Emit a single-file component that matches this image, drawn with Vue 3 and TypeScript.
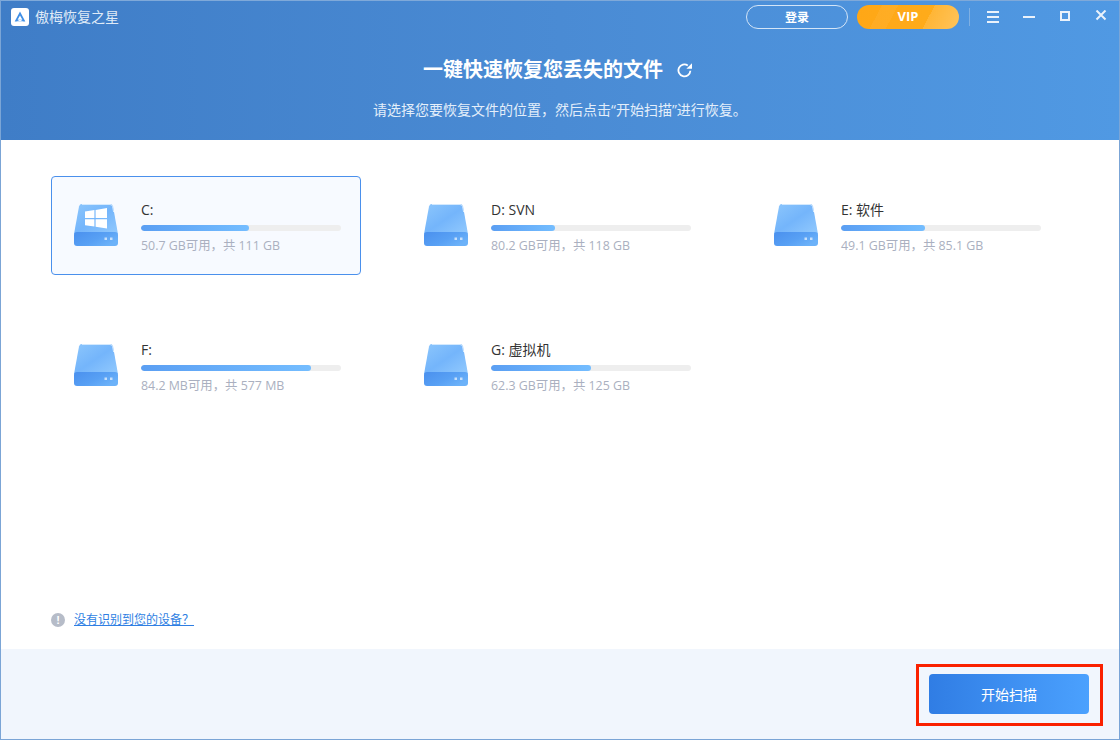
<script setup lang="ts">
interface Drive {
  id: string
  label: string
  used: number
  info: string
  system?: boolean
  selected?: boolean
}

const drives: Drive[] = [
  { id: 'c', label: 'C:', used: 54, info: '50.7 GB可用，共 111 GB', system: true, selected: true },
  { id: 'd', label: 'D: SVN', used: 32, info: '80.2 GB可用，共 118 GB' },
  { id: 'e', label: 'E: 软件', used: 42, info: '49.1 GB可用，共 85.1 GB' },
  { id: 'f', label: 'F:', used: 85, info: '84.2 MB可用，共 577 MB' },
  { id: 'g', label: 'G: 虚拟机', used: 50, info: '62.3 GB可用，共 125 GB' }
]
</script>

<template>
  <div class="window">
    <header class="hero">
      <div class="titlebar">
        <div class="brand">
          <svg class="logo" viewBox="0 0 18 18" width="18" height="18">
            <rect width="18" height="18" rx="3" fill="#fff" />
            <path d="M9 3.6 L14.3 13.6 H3.7 Z M9 7.4 L6.6 11.8 H11.4 Z" fill="#3f8fe6" fill-rule="evenodd" />
            <path d="M5.4 13.6 L9 11.8 L12.6 13.6 Z" fill="#fff" />
          </svg>
          <span class="app-name">傲梅恢复之星</span>
        </div>
        <div class="controls">
          <button class="login">登录</button>
          <button class="vip">VIP</button>
          <span class="sep"></span>
          <svg class="ctl" viewBox="0 0 14 14" width="14" height="14">
            <path d="M1 2h12M1 7h12M1 12h12" stroke="#eaf2fb" stroke-width="2" fill="none" />
          </svg>
          <svg class="ctl" viewBox="0 0 14 14" width="14" height="14">
            <path d="M1 7h12" stroke="#eaf2fb" stroke-width="2" fill="none" />
          </svg>
          <svg class="ctl" viewBox="0 0 14 14" width="14" height="14">
            <rect x="3" y="2" width="8" height="8" stroke="#eaf2fb" stroke-width="2" fill="none" />
          </svg>
          <svg class="ctl" viewBox="0 0 14 14" width="14" height="14">
            <path d="M2.5 0.5l9 9M11.5 0.5l-9 9" stroke="#eaf2fb" stroke-width="2" fill="none" />
          </svg>
        </div>
      </div>
      <div class="headline">
        <h1>一键快速恢复您丢失的文件</h1>
        <svg class="refresh" viewBox="0 0 16 16" width="16" height="16">
          <path d="M13.4 8.8A6 6 0 1 1 10.8 3.4" stroke="#fff" stroke-width="1.8" fill="none" />
          <path d="M9.4 6.8 H15 V1.2 Z" fill="#fff" />
        </svg>
      </div>
      <p class="sub">请选择您要恢复文件的位置，然后点击“开始扫描”进行恢复。</p>
    </header>

    <main class="content">
      <section class="grid">
        <div v-for="d in drives" :key="d.id" class="drive" :class="{ selected: d.selected }">
          <svg class="disk" viewBox="0 0 44 42" width="44" height="42">
            <defs>
              <linearGradient :id="'top-' + d.id" x1="0" y1="0" x2="1" y2="1">
                <stop offset="0" stop-color="#8cc6fc" />
                <stop offset="0.5" stop-color="#74b5fb" />
                <stop offset="1" stop-color="#93cafd" />
              </linearGradient>
              <linearGradient :id="'base-' + d.id" x1="0" y1="0" x2="1" y2="0.6">
                <stop offset="0" stop-color="#4a90ee" />
                <stop offset="0.6" stop-color="#58a0f4" />
                <stop offset="1" stop-color="#6cb2f9" />
              </linearGradient>
            </defs>
            <path d="M8 0 H36 Q38.4 0 39 2.4 L44 30 H0 L5 2.4 Q5.6 0 8 0 Z" :fill="'url(#top-' + d.id + ')'" />
            <path d="M8 0.5 H36 Q38.2 0.5 38.6 2.6 L39.6 8" stroke="#d3e9fe" stroke-width="1" fill="none" />
            <path d="M0 31 Q0 28 3 28 H41 Q44 28 44 31 V39 Q44 42 41 42 H3 Q0 42 0 39 Z" :fill="'url(#base-' + d.id + ')'" />
            <rect x="30.5" y="33.5" width="2.5" height="2.5" fill="#c6e0fb" />
            <rect x="36" y="33.5" width="2.5" height="2.5" fill="#c6e0fb" />
            <path v-if="d.system" d="M11 7.6 L20.4 6.1 V14 H11 Z M21.6 5.9 L33 4.1 V14 H21.6 Z M11 15.2 H20.4 V22.6 L11 21.2 Z M21.6 15.2 H33 V24.4 L21.6 22.8 Z" fill="#fff" />
          </svg>
          <div class="meta">
            <div class="label">{{ d.label }}</div>
            <div class="track">
              <div class="fill" :style="{ width: d.used + '%' }"></div>
            </div>
            <div class="info">{{ d.info }}</div>
          </div>
        </div>
      </section>

      <div class="hint">
        <span class="bang">!</span>
        <a class="hint-link">没有识别到您的设备？</a>
      </div>
    </main>

    <footer class="bottom">
      <div class="highlight">
        <button class="start">开始扫描</button>
      </div>
    </footer>
  </div>
</template>

<style>
html, body { margin: 0; padding: 0; background: #fff; }
</style>

<style scoped>
.window {
  box-sizing: border-box;
  width: 1120px;
  height: 740px;
  display: flex;
  flex-direction: column;
  border: 1px solid #7ba5d6;
  border-top: 0;
  font-family: "Open Sans", "Noto Sans CJK SC", sans-serif;
  background: #fff;
  overflow: hidden;
}
.hero {
  height: 140px;
  flex: none;
  background: linear-gradient(90deg, #3f7dc7 0%, #4a8bd4 50%, #5099e3 100%);
  color: #fff;
  display: flex;
  flex-direction: column;
  align-items: center;
  border-top: 1px solid #7fa9d9;
  box-sizing: border-box;
}
.titlebar {
  align-self: stretch;
  height: 32px;
  display: flex;
  justify-content: space-between;
  align-items: center;
  padding: 0 11px 0 10px;
}
.brand { display: flex; align-items: center; gap: 6px; }
.logo { display: block; }
.app-name { font-size: 14px; color: #dfeaf7; line-height: 18px; }
.controls { display: flex; align-items: center; }
.login {
  box-sizing: border-box;
  width: 102px;
  height: 24px;
  border-radius: 12px;
  border: 1px solid #d4e5f7;
  background: transparent;
  color: #fff;
  font: 700 12px "Noto Sans CJK SC", sans-serif;
  padding: 0 0 2px;
}
.vip {
  width: 102px;
  height: 24px;
  margin-left: 9px;
  border: 0;
  border-radius: 12px;
  background:
    linear-gradient(118deg, rgba(255,255,255,0) 68%, rgba(255,255,255,.12) 68%, rgba(255,255,255,.28) 100%),
    linear-gradient(118deg, transparent 0 22%, rgba(255,255,255,.05) 22% 36%, transparent 36% 100%),
    linear-gradient(90deg, #ffa716 0%, #ffad1c 100%);
  color: #fff;
  font: 700 13px "Open Sans", sans-serif;
  padding: 0 0 2px;
}
.sep { width: 1px; height: 18px; background: #7fb0e3; margin: 0 16px 0 10px; }
.ctl { display: block; margin-right: 22px; }
.ctl:last-child { margin-right: 0; }
.headline {
  margin-top: 23px;
  margin-right: 4px;
  display: flex;
  align-items: center;
  gap: 14px;
}
h1 {
  margin: 0;
  font-size: 20px;
  line-height: 28px;
  font-weight: 700;
  color: #fff;
}
.refresh { display: block; }
.sub {
  margin: 16px 0 0;
  font-size: 14px;
  line-height: 20px;
  color: #e3eefa;
}
.content {
  flex: 1;
  min-height: 0;
  display: flex;
  flex-direction: column;
  justify-content: space-between;
  padding: 36px 50px 20px;
}
.grid {
  display: grid;
  grid-template-columns: repeat(3, 310px);
  grid-auto-rows: 99px;
  column-gap: 40px;
  row-gap: 41px;
}
.drive {
  box-sizing: border-box;
  border: 1px solid transparent;
  border-radius: 4px;
  display: flex;
  align-items: center;
  padding: 0 19px 1px 22px;
  gap: 23px;
}
.drive.selected {
  border-color: #4a90ec;
  background: #f7faff;
}
.disk { display: block; flex: none; }
.meta { width: 200px; margin-top: 6px; }
.label { font-size: 14px; line-height: 20px; color: #333; margin-bottom: 5px; }
.track { height: 6px; border-radius: 3px; background: #eeeeee; overflow: hidden; }
.fill { height: 100%; border-radius: 3px; background: linear-gradient(90deg, #5b9ff3, #74bdff); }
.info { margin-top: 5px; font-size: 12.4px; line-height: 20px; color: #aab0c0; }
.hint { display: flex; align-items: center; gap: 9px; }
.bang {
  width: 14px;
  height: 14px;
  border-radius: 50%;
  background: #b6bcc8;
  color: #fff;
  font: 700 11px/14px "Liberation Sans", sans-serif;
  text-align: center;
}
.hint-link {
  font-size: 12px;
  line-height: 18px;
  color: #2f7fe3;
  text-decoration: underline;
}
.bottom {
  flex: none;
  height: 90px;
  background: #f1f6fd;
  display: flex;
  justify-content: flex-end;
  align-items: flex-start;
  padding: 15px 16px 0 0;
  box-sizing: border-box;
}
.highlight {
  box-sizing: border-box;
  width: 187px;
  height: 62px;
  border: 3px solid #fa2100;
  padding: 7px 0 0 10px;
}
.start {
  display: block;
  width: 160px;
  height: 40px;
  border: 0;
  border-radius: 4px;
  background: linear-gradient(90deg, #307de4, #4ba1fe);
  color: #fff;
  font: 400 14px "Noto Sans CJK SC", sans-serif;
  padding: 0;
}
</style>
